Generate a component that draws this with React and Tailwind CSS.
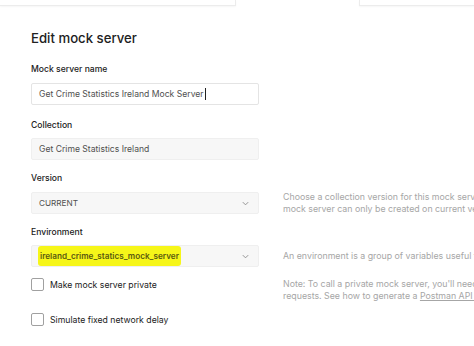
import React from 'react';

function Chevron() {
  return (
    <svg width="9" height="9" viewBox="0 0 10 10" fill="none" stroke="#8a8a8a" strokeWidth="1" className="mr-[8px]">
      <path d="M2 3.5 L5 6.5 L8 3.5" />
    </svg>
  );
}

function Label({ children, className = '' }) {
  return <div className={`text-[8.6px] leading-[12px] font-medium text-[#212121] ${className}`}>{children}</div>;
}

function Help({ children, className = '' }) {
  return (
    <div className={`pl-[24px] text-[8.8px] leading-[11.5px] text-[#a6a6a6] whitespace-nowrap ${className}`}>
      {children}
    </div>
  );
}

function Checkbox({ label }) {
  return (
    <div className="flex items-center gap-[6px]">
      <div className="w-[13px] h-[13px] rounded-[2px] border border-[#a0a0a0] bg-white" />
      <span className="text-[8.7px] leading-[12px] text-[#212121]">{label}</span>
    </div>
  );
}

export default function App() {
  return (
    <div className="w-[474px] h-[346px] bg-white overflow-hidden" style={{ fontFamily: 'Inter, "Noto Sans", sans-serif' }}>
      {/* Top tabs */}
      <div className="flex h-[6px]">
        <div className="w-[236px] border-b border-r border-[#ececec] shadow-[0_1px_2px_rgba(0,0,0,0.04)]" />
        <div className="flex-1" />
        <div className="w-[115px] border-b border-l border-[#ececec] shadow-[0_1px_2px_rgba(0,0,0,0.04)]" />
      </div>

      <div className="pl-[31px] pt-[22px]">
        <h1 className="text-[13.2px] leading-[20px] font-medium text-[#212121]">Edit mock server</h1>

        {/* Mock server name */}
        <Label className="mt-[15px]">Mock server name</Label>
        <div className="mt-[8px] w-[228px] h-[22px] border border-[#e4e4e4] rounded-[2px] flex items-center px-[7px]">
          <span className="text-[8.6px] text-[#505050]">Get Crime Statistics Ireland Mock Server</span>
          <span className="w-px h-[12px] bg-[#222] ml-[1px]" />
        </div>

        {/* Collection */}
        <Label className="mt-[14px]">Collection</Label>
        <div className="mt-[7px] w-[228px] h-[22px] bg-[#f7f7f7] border border-[#efefef] rounded-[2px] flex items-center px-[7px]">
          <span className="text-[8.6px] text-[#505050]">Get Crime Statistics Ireland</span>
        </div>

        {/* Version */}
        <Label className="mt-[12px]">Version</Label>
        <div className="flex mt-[8px]">
          <div className="w-[228px] h-[22px] shrink-0 bg-[#f7f7f7] border border-[#efefef] rounded-[2px] flex items-center justify-between pl-[7px]">
            <span className="text-[8.2px] text-[#505050]">CURRENT</span>
            <Chevron />
          </div>
          <Help className="-mt-[1px]">
            <div>Choose a collection version for this mock server. A new</div>
            <div>mock server can only be created on current version.</div>
          </Help>
        </div>

        {/* Environment */}
        <Label className="mt-[12px]">Environment</Label>
        <div className="flex mt-[7px]">
          <div className="w-[228px] h-[22px] shrink-0 bg-[#f7f7f7] border border-[#efefef] rounded-[2px] flex items-center justify-between pl-[6px]">
            <span className="text-[8.2px] font-semibold text-[#5a5a10] bg-[#f6f619] px-[2px] py-[4px] rounded-[3px]">ireland_crime_statics_mock_server</span>
            <Chevron />
          </div>
          <Help className="pt-[5px]">An environment is a group of variables useful for testing.</Help>
        </div>

        {/* Private */}
        <div className="flex mt-[11px]">
          <div className="w-[228px] shrink-0">
            <Checkbox label="Make mock server private" />
          </div>
          <Help>
            <div>Note: To call a private mock server, you'll need to add an</div>
            <div>
              requests. See how to generate a <span className="underline">Postman API key</span>.
            </div>
          </Help>
        </div>

        <div className="mt-[12px]">
          <Checkbox label="Simulate fixed network delay" />
        </div>
      </div>
    </div>
  );
}
